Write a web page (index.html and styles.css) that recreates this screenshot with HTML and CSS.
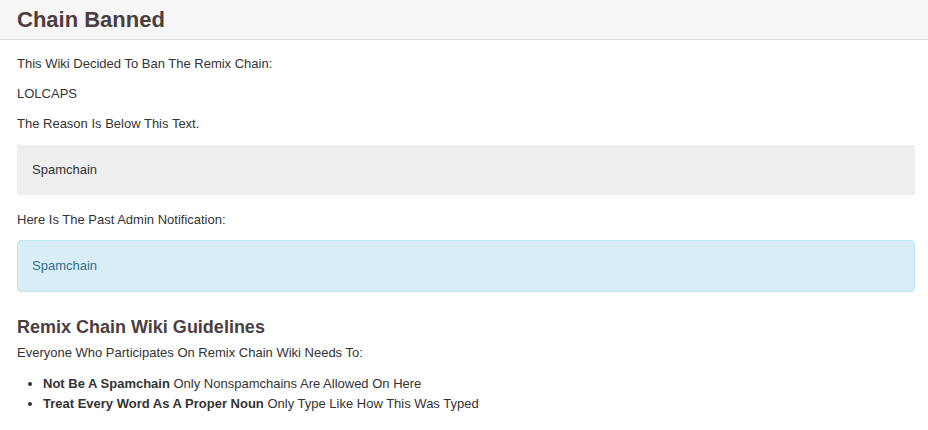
FILE: index.html
```html
<!DOCTYPE html>
<html>
<head>
<meta charset="utf-8">
<link rel="stylesheet" href="styles.css">
</head>
<body>
<header class="page-header">
  <h1 class="title">Chain Banned</h1>
</header>
<main class="content">
  <p>This Wiki Decided To Ban The Remix Chain:</p>
  <p>LOLCAPS</p>
  <p>The Reason Is Below This Text.</p>
  <div class="well">Spamchain</div>
  <p>Here Is The Past Admin Notification:</p>
  <div class="alert">Spamchain</div>
  <h3 class="subtitle">Remix Chain Wiki Guidelines</h3>
  <p class="tight">Everyone Who Participates On Remix Chain Wiki Needs To:</p>
  <ul class="rules">
    <li><b>Not Be A Spamchain</b> Only Nonspamchains Are Allowed On Here</li>
    <li><b>Treat Every Word As A Proper Noun</b> Only Type Like How This Was Typed</li>
  </ul>
</main>
</body>
</html>
```
FILE: styles.css
```css
html, body {
  margin: 0;
  padding: 0;
  background: #fff;
}
body {
  font-family: "Liberation Sans", Arial, sans-serif;
  font-size: 13px;
  line-height: 20px;
  color: #333;
}
.page-header {
  background: #f6f6f6;
  border-bottom: 1px solid #dddddd;
  height: 39px;
  padding: 0 17px;
  display: flex;
  align-items: center;
}
.title {
  margin: 0;
  font-size: 22px;
  font-weight: bold;
  color: #4b3e41;
  line-height: 26px;
}
.content {
  padding: 14px 13px 0 17px;
}
p {
  margin: 0 0 10px;
}
.well {
  background: #eeeeee;
  padding: 15px;
  margin: 11px 0 15px;
}
.alert {
  background: #d9edf7;
  border: 1px solid #bce8f1;
  border-radius: 4px;
  color: #31708f;
  padding: 15px 14px;
  line-height: 20px;
  margin: 0 0 23px;
}
.subtitle {
  margin: 0 0 4px;
  font-size: 18px;
  font-weight: bold;
  line-height: 24px;
  color: #4b3e41;
}
.tight {
  margin-bottom: 11px;
}
.rules {
  margin: 0;
  padding-left: 26px;
}
.rules b {
  color: #333;
}
```
